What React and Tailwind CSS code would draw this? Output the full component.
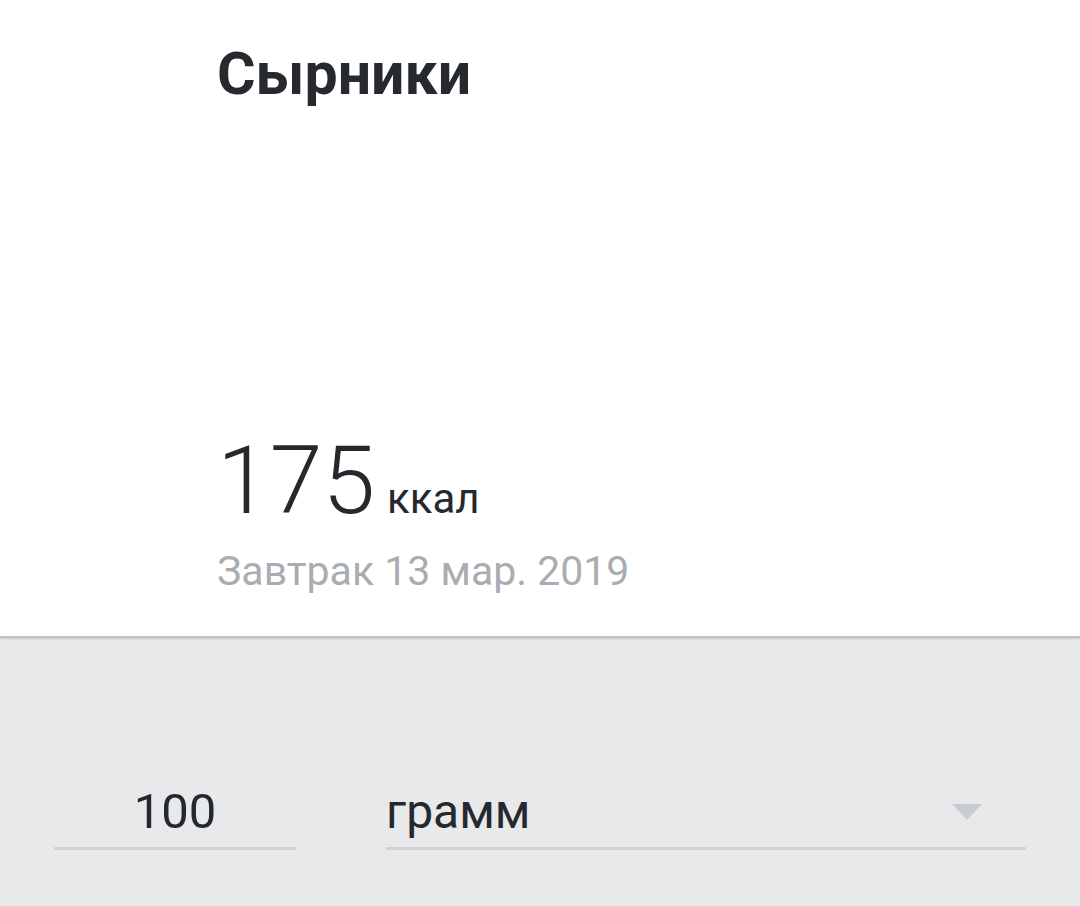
export default function App() {
  return (
    <div className="w-[1080px] h-[906px] flex flex-col bg-[#e8e9eb] overflow-hidden" style={{fontFamily: "Roboto, 'Noto Sans', sans-serif"}}>
      <div className="h-[636px] shrink-0 bg-white pl-[217px] pt-[44px] flex flex-col">
        <h1 className="text-[59px] leading-none font-bold text-[#262a2f]">Сырники</h1>

        <div className="mt-auto flex items-baseline gap-[12px] text-[#25282c]">
          <span className="text-[95px] leading-none font-light">175</span>
          <span className="text-[42px] leading-none">ккал</span>
        </div>
        <div className="mt-[23px] mb-[44px] text-[41px] leading-none text-[#a9adb2]">
          Завтрак 13 мар. 2019
        </div>
      </div>

      <div className="h-[2px] bg-[#c2c3c5] shadow-[0_1px_2px_rgba(0,0,0,0.15)]" />

      <div className="flex gap-[90px] pl-[54px] pt-[149px]">
        <div className="w-[242px] border-b-[3px] border-[#cfd2d5] pb-[11px] text-center">
          <span className="text-[49px] leading-none text-[#25282c]">100</span>
        </div>
        <div className="w-[640px] border-b-[3px] border-[#cfd2d5] pb-[11px] flex items-center justify-between">
          <span className="text-[48px] leading-none text-[#25282c]">грамм</span>
          <svg width="30" height="16" viewBox="0 0 30 16" className="mr-[44px]">
            <path d="M0 0 L30 0 L15 16 Z" fill="#c8cbd0" />
          </svg>
        </div>
      </div>
    </div>
  );
}
